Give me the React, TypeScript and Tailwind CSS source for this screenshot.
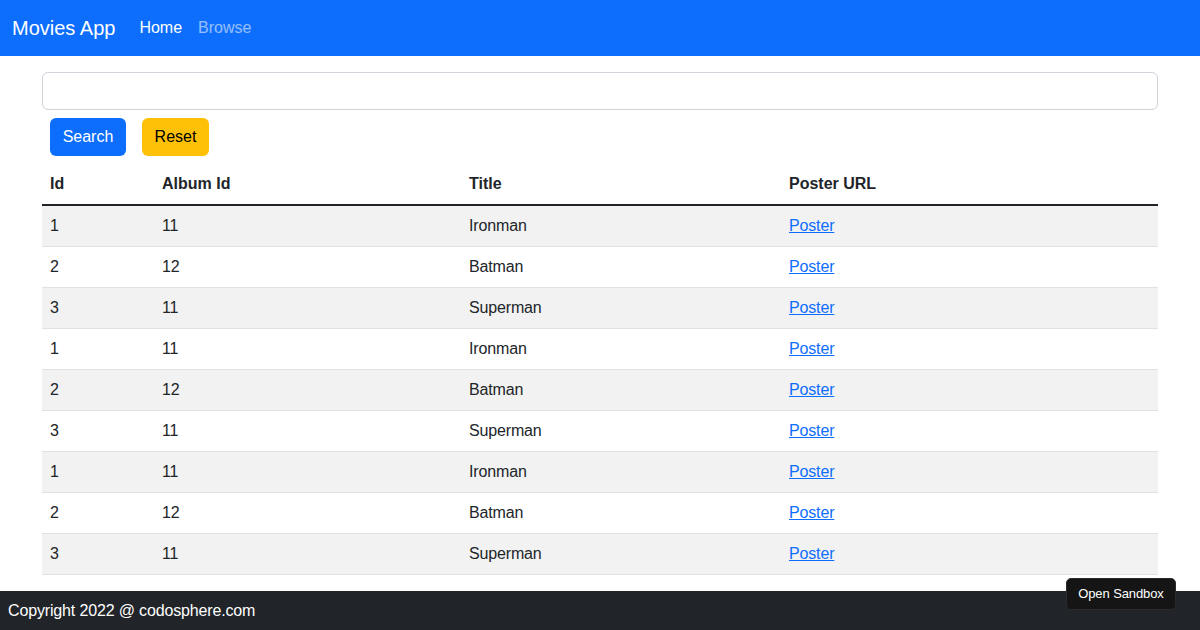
import React from "react";

const rows = [
  { id: 1, album: 11, title: "Ironman" },
  { id: 2, album: 12, title: "Batman" },
  { id: 3, album: 11, title: "Superman" },
  { id: 1, album: 11, title: "Ironman" },
  { id: 2, album: 12, title: "Batman" },
  { id: 3, album: 11, title: "Superman" },
  { id: 1, album: 11, title: "Ironman" },
  { id: 2, album: 12, title: "Batman" },
  { id: 3, album: 11, title: "Superman" },
];

export default function App() {
  return (
    <div
      className="relative h-[630px] w-[1200px] overflow-hidden bg-white text-[16px] text-[#212529]"
      style={{ fontFamily: '"Liberation Sans", Arial, sans-serif' }}
    >
      <nav className="flex h-[56px] items-center bg-[#0d6efd] px-3">
        <span className="mr-[24px] text-[20px] leading-[30px] text-white">Movies App</span>
        <span className="leading-6 text-white">Home</span>
        <span className="ml-[16px] leading-6 text-white/55">Browse</span>
      </nav>

      <div className="mx-[42px] mt-4">
        <div className="h-[38px] rounded-[6px] border border-[#ced4da] bg-white" />
        <div className="flex">
          <button className="my-2 ml-2 flex h-[38px] w-[76px] items-center justify-center rounded-[6px] bg-[#0d6efd] leading-6 text-white">
            Search
          </button>
          <button className="my-2 ml-4 flex h-[38px] w-[67px] items-center justify-center rounded-[6px] bg-[#ffc107] leading-6 text-black">
            Reset
          </button>
        </div>
        <table className="w-full border-collapse text-left">
          <thead>
            <tr className="border-b-2 border-[#212529]">
              <th className="w-[112px] px-2 py-2 font-bold leading-6">Id</th>
              <th className="w-[307px] px-2 py-2 font-bold leading-6">Album Id</th>
              <th className="w-[320px] px-2 py-2 font-bold leading-6">Title</th>
              <th className="px-2 py-2 font-bold leading-6">Poster URL</th>
            </tr>
          </thead>
          <tbody className="tracking-[-0.15px]">
            {rows.map((r, i) => (
              <tr
                key={i}
                className={`border-b border-[#dee2e6] ${i % 2 === 0 ? "bg-[#f2f2f2]" : "bg-white"}`}
              >
                <td className="px-2 py-2 leading-6">{r.id}</td>
                <td className="px-2 py-2 leading-6">{r.album}</td>
                <td className="px-2 py-2 leading-6">{r.title}</td>
                <td className="px-2 py-2 leading-6">
                  <a href="#" className="text-[#0d6efd] underline">
                    Poster
                  </a>
                </td>
              </tr>
            ))}
          </tbody>
        </table>
      </div>

      <footer className="mt-4 flex h-[40px] items-center bg-[#212529] px-2 tracking-[-0.15px] text-white">
        Copyright 2022 @ codosphere.com
      </footer>

      <div className="absolute bottom-[20px] right-[24px] flex h-[32px] w-[110px] items-center justify-center rounded-[5px] border border-[#2a2a2a] bg-[#151515] text-[13px] tracking-[-0.1px] text-white">
        Open Sandbox
      </div>
    </div>
  );
}
